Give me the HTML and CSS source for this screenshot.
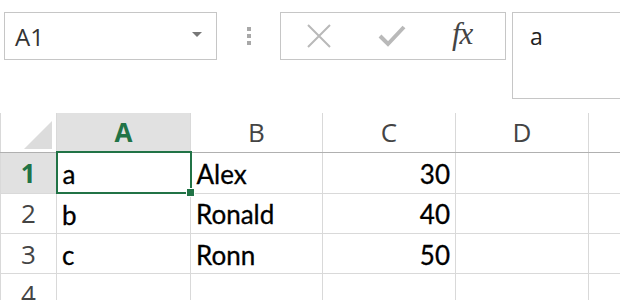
FILE: index.html
```html
<!DOCTYPE html>
<html lang="en">
<head>
  <meta charset="UTF-8" />
  <title>Sheet</title>
  <link rel="stylesheet" href="styles.css">
</head>
<body>

  <div class="formula-row">
    <div class="name-box">
      <span>A1</span>
      <span class="arrow"></span>
    </div>
    <div class="grip"><i></i><i></i><i></i></div>
    <div class="fx-buttons">
      <svg class="icon" width="26" height="26" viewBox="0 0 26 26">
        <path d="M2 2 L24 24 M24 2 L2 24" stroke="#b9b9b9" stroke-width="2" fill="none"/>
      </svg>
      <svg class="icon" width="28" height="24" viewBox="0 0 28 24">
        <path d="M2 12 L10 20 L26 3" stroke="#b9b9b9" stroke-width="4" fill="none"/>
      </svg>
      <span class="fx">fx</span>
    </div>
    <div class="formula-input">a</div>
  </div>

  <table class="grid">
    <tr class="col-heads">
      <th class="corner"><span class="tri"></span></th>
      <th class="sel">A</th>
      <th>B</th>
      <th>C</th>
      <th>D</th>
      <th class="last"></th>
    </tr>
    <tr>
      <th class="row-head sel">1</th>
      <td class="active">a<span class="handle"></span></td>
      <td>Alex</td>
      <td class="num">30</td>
      <td></td>
      <td></td>
    </tr>
    <tr>
      <th class="row-head">2</th>
      <td>b</td>
      <td>Ronald</td>
      <td class="num">40</td>
      <td></td>
      <td></td>
    </tr>
    <tr>
      <th class="row-head">3</th>
      <td>c</td>
      <td>Ronn</td>
      <td class="num">50</td>
      <td></td>
      <td></td>
    </tr>
    <tr>
      <th class="row-head">4</th>
      <td></td>
      <td></td>
      <td></td>
      <td></td>
      <td></td>
    </tr>
  </table>

</body>
</html>
```

FILE: styles.css
```css
body {
  margin: 0;
  padding: 0;
  background: #fff;
  font-family: 'Open Sans', sans-serif;
  overflow: hidden;
  width: 620px;
  height: 300px;
}
.formula-row {
  display: flex;
  align-items: flex-start;
  padding-top: 12px;
  height: 101px;
}
.name-box {
  margin-left: 4px;
  border: 1px solid #c6c6c6;
  display: flex;
  align-items: center;
  justify-content: space-between;
  padding: 0 14px 0 10px;
  box-sizing: border-box;
  width: 213px;
  height: 48px;
  font-size: 24px;
  color: #333;
}
.arrow {
  width: 0;
  height: 0;
  border-left: 5px solid transparent;
  border-right: 5px solid transparent;
  border-top: 5px solid #777;
  margin-top: -4px;
}
.grip {
  width: 63px;
  height: 48px;
  display: flex;
  flex-direction: column;
  align-items: center;
  justify-content: center;
  gap: 3px;
}
.grip i {
  width: 4px;
  height: 4px;
  background: #a8a8a8;
}
.fx-buttons {
  width: 226px;
  height: 48px;
  border: 1px solid #c6c6c6;
  box-sizing: border-box;
  display: flex;
  align-items: center;
  padding-left: 25px;
}
.fx-buttons .icon:first-child {
  margin-right: 46px;
}
.fx {
  margin-left: 46px;
  font-family: 'Liberation Serif', serif;
  font-style: italic;
  font-size: 31px;
  color: #444;
  letter-spacing: -1px;
  margin-top: -4px;
}
.formula-input {
  margin-left: 6px;
  flex: 1;
  height: 87px;
  border: 1px solid #c6c6c6;
  border-right: none;
  box-sizing: border-box;
  padding: 7px 0 0 17px;
  font-size: 23px;
  color: #222;
}
.grid {
  border-collapse: collapse;
  table-layout: fixed;
  width: 640px;
}
.grid th, .grid td {
  border: 1px solid #d9d9d9;
  padding: 0;
}
.grid td {
  height: 37px;
  font-family: 'Lato', sans-serif;
  font-size: 26px;
  color: #000;
  -webkit-text-stroke: 0.3px #000;
  padding-left: 5px;
  padding-top: 2px;
}
.grid td.num {
  text-align: right;
  padding-right: 5px;
}
.col-heads th {
  border-top: none;
  border-bottom: 1px solid #b0b0b0;
  font-weight: normal;
  font-size: 26px;
  color: #444;
  height: 38px;
}
.col-heads th:nth-child(1) { width: 55px; }
.col-heads th:nth-child(2) { width: 133px; }
.col-heads th:nth-child(3) { width: 131px; }
.col-heads th:nth-child(4) { width: 132px; }
.col-heads th:nth-child(5) { width: 132px; }
.corner {
  border-left: none;
  position: relative;
}
.tri {
  position: absolute;
  right: 4px;
  bottom: 3px;
  width: 0;
  height: 0;
  border-left: 28px solid transparent;
  border-bottom: 28px solid #dcdcdc;
}
.row-head {
  border-left: none;
  height: 39px;
  font-weight: normal;
  font-size: 26px;
  color: #444;
  text-align: center;
}
.grid th.sel {
  background: #e1e1e1;
  color: #217346;
  font-weight: bold;
}
.grid td.active {
  border: 2px solid #217346;
  position: relative;
}
.handle {
  position: absolute;
  right: -5px;
  bottom: -5px;
  width: 7px;
  height: 7px;
  background: #217346;
  border: 1px solid #fff;
}
```
